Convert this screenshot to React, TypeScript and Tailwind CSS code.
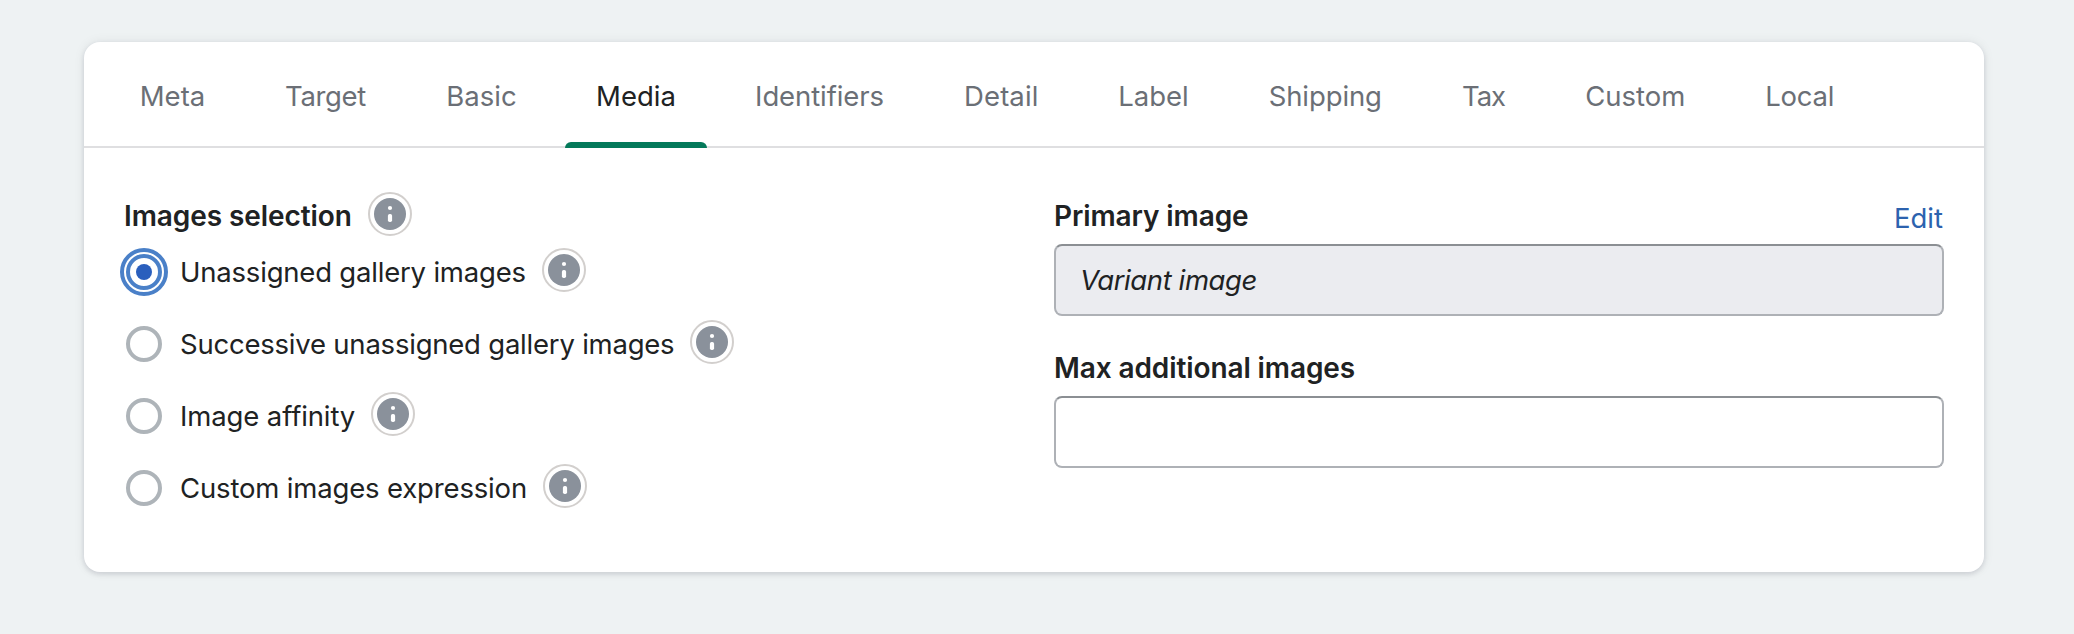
import React, { useState } from "react";

const tabs = [
  { name: "Meta", size: "w-[65px]" },
  { name: "Target", size: "w-[81px] tracking-[-0.35px]" },
  { name: "Basic", size: "w-[71px]" },
  { name: "Media", size: "w-[78px]" },
  { name: "Identifiers", size: "w-[129px] tracking-[-0.1px]" },
  { name: "Detail", size: "w-[74.5px] tracking-[0.1px]" },
  { name: "Label", size: "w-[70px]" },
  { name: "Shipping", size: "w-[113.5px] tracking-[-0.1px]" },
  { name: "Tax", size: "w-[43px] tracking-[-1px]" },
  { name: "Custom", size: "w-[100.5px]" },
  { name: "Local", size: "w-[68.5px] tracking-[-0.2px]" },
];

const options = [
  { label: "Unassigned gallery images", spacing: "tracking-[-0.2px]" },
  { label: "Successive unassigned gallery images", spacing: "tracking-[-0.22px]" },
  { label: "Image affinity", spacing: "tracking-[-0.12px]" },
  { label: "Custom images expression", spacing: "tracking-[-0.16px]" },
];

const InfoButton = () => {
  return (
    <button
      aria-label="More information"
      className="ml-4 flex h-11 w-11 shrink-0 items-center justify-center self-start rounded-full border-2 border-[#d2cfcd] bg-white"
    >
      <svg className="h-8 w-8" viewBox="0 0 32 32">
        <circle cx="16" cy="16" r="16" fill="#8a919b" />
        <circle cx="16" cy="10" r="2.1" fill="#fff" />
        <rect x="13.9" y="16" width="4.2" height="8" rx="1.8" fill="#fff" />
      </svg>
    </button>
  );
};

const Radio = ({ checked }: { checked: boolean }) => {
  return checked ? (
    <span className="flex h-9 w-9 items-center justify-center rounded-full border-4 border-[#4a80c8] bg-white outline-4 outline-offset-2 outline-[#4a80c8]">
      <span className="h-4 w-4 rounded-full bg-[#2a5fbd]" />
    </span>
  ) : (
    <span className="h-9 w-9 rounded-full border-4 border-[#aeb4b9] bg-white" />
  );
};

export default function App() {
  const [tab, setTab] = useState("Media");
  const [selected, setSelected] = useState(options[0].label);

  return (
    <div className="h-[634px] bg-[#eef2f3] pl-[84px] pr-[90px] pt-[42px] font-['Inter',sans-serif] text-[27.5px] leading-10 text-[#202223]">
      <div className="h-[530px] rounded-2xl bg-white shadow-[0_0_12px_rgba(23,24,40,0.07),0_2px_5px_rgba(23,24,50,0.13)]">
        <nav className="flex h-[106px] px-4 shadow-[inset_0_-2px_0_#dfdfe1]">
          {tabs.map((t) => (
            <button
              key={t.name}
              onClick={() => setTab(t.name)}
              className={
                tab === t.name
                  ? "mx-2 flex flex-col justify-between pt-[34px] text-[#202223]"
                  : "mx-2 flex flex-col justify-between pt-[34px] text-[#6b6f76]"
              }
            >
              <span className="px-8">
                <span className={`flex justify-center whitespace-nowrap ${t.size}`}>{t.name}</span>
              </span>
              {tab === t.name && <span className="h-1.5 w-full rounded-t-md bg-[#04795a]" />}
            </button>
          ))}
        </nav>

        <div className="flex justify-between px-10 pt-11">
          <div>
            <div className="flex h-11 items-end text-[28px] font-semibold tracking-[-0.08px]">
              Images selection
              <InfoButton />
            </div>
            <div className="mt-3 flex flex-col gap-7">
              {options.map((option) => (
                <div key={option.label} className="flex h-11 items-end">
                  <div
                    role="radio"
                    aria-checked={selected === option.label}
                    onClick={() => setSelected(option.label)}
                    className="flex h-10 items-center gap-[18px] pl-0.5"
                  >
                    <Radio checked={selected === option.label} />
                    <span className={option.spacing}>{option.label}</span>
                  </div>
                  <InfoButton />
                </div>
              ))}
            </div>
          </div>

          <div className="w-[890px] pt-1">
            <div className="flex justify-between">
              <span className="text-[28px] font-semibold tracking-[-0.1px]">Primary image</span>
              <a href="#" className="-mb-0.5 pt-0.5 pr-px text-[#2c62ae]">
                Edit
              </a>
            </div>
            <div className="mt-2 flex h-[72px] items-center rounded-lg border-2 border-[#aeb1b6] border-t-[#8b8f93] bg-[#ebecf0] px-6 italic tracking-[-0.4px]">
              Variant image
            </div>
            <div className="mt-8 text-[28px] font-semibold tracking-[-0.1px]">Max additional images</div>
            <input
              type="text"
              aria-label="Max additional images"
              className="mt-2 block h-[72px] w-full rounded-lg border-2 border-[#aeb1b6] border-t-[#8b8f93] bg-white px-6 outline-none"
            />
          </div>
        </div>
      </div>
    </div>
  );
}
